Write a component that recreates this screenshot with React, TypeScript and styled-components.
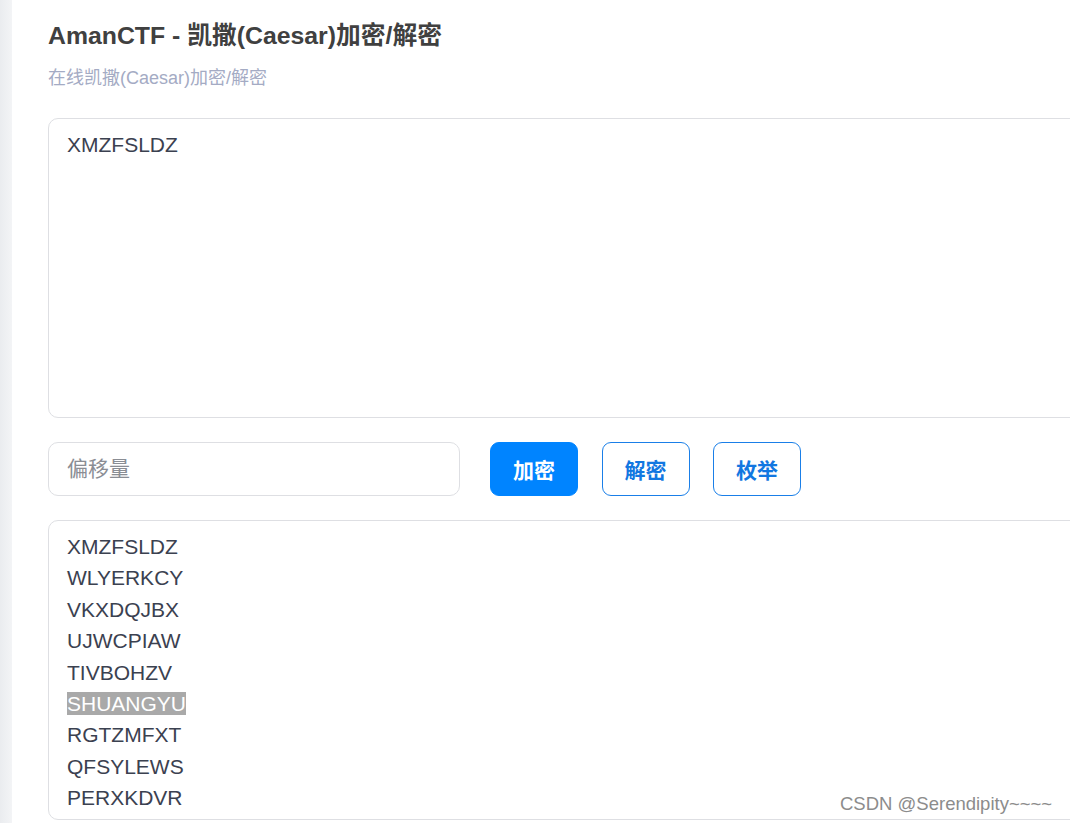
import React, { useState } from 'react';
import styled, { createGlobalStyle } from 'styled-components';

const GlobalStyle = createGlobalStyle`
  html, body {
    margin: 0;
    padding: 0;
    background: #ffffff;
    overflow: hidden;
  }
  body {
    font-family: "Liberation Sans", Arial, "Noto Sans CJK SC", sans-serif;
  }
`;

const Page = styled.div`
  display: flex;
  min-height: 823px;
`;

const SideStrip = styled.div`
  width: 12px;
  flex-shrink: 0;
  background: linear-gradient(to right, #eaecef, #f3f4f6);
`;

const Content = styled.main`
  width: 1100px;
  flex-shrink: 0;
  padding: 20px 0 0 36px;
  box-sizing: border-box;
  position: relative;
`;

const Title = styled.h1`
  margin: 0;
  font-size: 24.8px;
  line-height: 32px;
  font-weight: bold;
  color: #404040;
`;

const Subtitle = styled.p`
  margin: 13px 0 0;
  font-size: 18px;
  line-height: 26px;
  color: #a4abc4;
`;

const boxStyles = `
  box-sizing: border-box;
  width: 100%;
  height: 300px;
  border: 1px solid #dedfe3;
  border-radius: 10px;
  padding: 10px 18px;
  font-family: "Liberation Sans", Arial, "Noto Sans CJK SC", sans-serif;
  font-size: 21px;
  line-height: 31.4px;
  color: #3b4150;
  background: #ffffff;
`;

const InputArea = styled.textarea`
  ${boxStyles}
  display: block;
  margin-top: 27px;
  resize: none;
  outline: none;
`;

const OutputArea = styled.div`
  ${boxStyles}
  overflow: hidden;
`;

const OutputLine = styled.div<{ $selected?: boolean }>`
  span {
    background: ${({ $selected }) => ($selected ? '#a9a9a9' : 'transparent')};
    color: ${({ $selected }) => ($selected ? '#ffffff' : 'inherit')};
  }
`;

const Controls = styled.div`
  display: flex;
  align-items: center;
  margin: 24px 0 24px;
`;

const ShiftInput = styled.input`
  box-sizing: border-box;
  width: 412px;
  height: 54px;
  border: 1px solid #dedfe3;
  border-radius: 10px;
  padding: 0 18px;
  font-family: "Liberation Sans", Arial, "Noto Sans CJK SC", sans-serif;
  font-size: 21px;
  color: #3b4150;
  outline: none;
  margin-right: 30px;

  &::placeholder {
    color: #8a8d94;
  }
`;

const ActionButton = styled.button<{ $primary?: boolean }>`
  box-sizing: border-box;
  width: 88px;
  height: 54px;
  margin-right: 23.5px;
  border-radius: 9px;
  border: 1px solid ${({ $primary }) => ($primary ? '#0084ff' : '#1a7fe8')};
  background: ${({ $primary }) => ($primary ? '#0084ff' : '#ffffff')};
  color: ${({ $primary }) => ($primary ? '#ffffff' : '#1277e1')};
  font-family: "Noto Sans CJK SC", sans-serif;
  font-size: 21px;
  font-weight: bold;
  cursor: pointer;
`;

const Watermark = styled.div`
  position: absolute;
  left: 828px;
  top: 793px;
  font-family: "Liberation Sans", Arial, sans-serif;
  font-size: 18.5px;
  color: #8c8c8c;
  text-shadow: 0 0 2px #ffffff;
  white-space: nowrap;
`;

const shiftText = (text: string, n: number) =>
  text.replace(/[A-Z]/g, (c) => String.fromCharCode(((c.charCodeAt(0) - 65 + n + 26) % 26) + 65));

const App: React.FC = () => {
  const [cipher, setCipher] = useState('XMZFSLDZ');
  const lines = Array.from({ length: 9 }, (_, i) => shiftText(cipher, -i));

  return (
    <>
      <GlobalStyle />
      <Page>
        <SideStrip />
        <Content>
          <Title>AmanCTF - 凯撒(Caesar)加密/解密</Title>
          <Subtitle>在线凯撒(Caesar)加密/解密</Subtitle>
          <InputArea value={cipher} onChange={(e) => setCipher(e.target.value)} />
          <Controls>
            <ShiftInput placeholder="偏移量" />
            <ActionButton $primary>加密</ActionButton>
            <ActionButton>解密</ActionButton>
            <ActionButton>枚举</ActionButton>
          </Controls>
          <OutputArea>
            {lines.map((line, i) => (
              <OutputLine key={i} $selected={line === 'SHUANGYU'}>
                <span>{line}</span>
              </OutputLine>
            ))}
          </OutputArea>
          <Watermark>CSDN @Serendipity~~~~</Watermark>
        </Content>
      </Page>
    </>
  );
};

export default App;
